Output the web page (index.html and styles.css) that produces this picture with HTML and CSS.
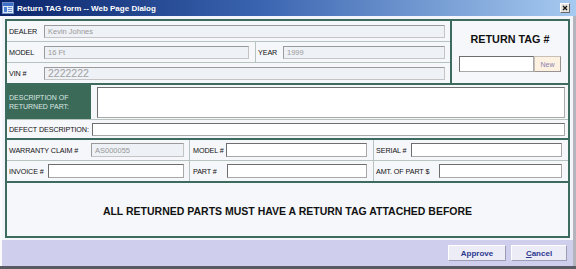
FILE: index.html
```html
<!DOCTYPE html>
<html>
<head>
<meta charset="utf-8">
<title>Return TAG form</title>
<link rel="stylesheet" href="styles.css">
</head>
<body>
<div class="window">
  <div class="titlebar">
    <svg class="appicon" width="12" height="12" viewBox="0 0 12 12">
      <rect x="0.5" y="0.5" width="11" height="11" fill="#dfe9f7" stroke="#6f8fc4"/>
      <rect x="1" y="1" width="10" height="3" fill="#3d6fc8"/>
      <rect x="2" y="5" width="3" height="5" fill="#4a7fd6"/>
      <rect x="6" y="5" width="4" height="1" fill="#6a8fd0"/>
      <rect x="6" y="7" width="4" height="1" fill="#6a8fd0"/>
      <rect x="6" y="9" width="4" height="1" fill="#6a8fd0"/>
    </svg>
    <span class="title">Return TAG form -- Web Page Dialog</span>
    <span class="close">
      <svg width="10" height="10" viewBox="0 0 10 10">
        <path d="M2.5 2.5 L7.5 7.5 M7.5 2.5 L2.5 7.5" stroke="#111" stroke-width="1.6"/>
      </svg>
    </span>
  </div>
  <div class="client">
    <div class="form">
      <div class="top">
        <div class="fields">
          <div class="row">
            <span class="lbl w37">DEALER</span>
            <span class="inp dis">Kevin Johnes</span>
          </div>
          <div class="row split">
            <div class="cell c-model">
              <span class="lbl w37">MODEL</span>
              <span class="inp dis sm">16 Ft</span>
            </div>
            <div class="cell c-year">
              <span class="lbl w27">YEAR</span>
              <span class="inp dis sm">1999</span>
            </div>
          </div>
          <div class="row">
            <span class="lbl w37">VIN #</span>
            <span class="inp dis big">2222222</span>
          </div>
        </div>
        <div class="tagpanel">
          <div class="tagtitle">RETURN TAG #</div>
          <div class="tagctl">
            <span class="inp tagin"></span>
            <span class="newbtn">New</span>
          </div>
        </div>
      </div>
      <div class="desc">
        <div class="desclbl">DESCRIPTION OF<br>RETURNED PART:</div>
        <span class="inp area"></span>
      </div>
      <div class="defect">
        <span class="lbl w85">DEFECT DESCRIPTION:</span>
        <span class="inp"></span>
      </div>
      <div class="grid">
        <div class="gcell g1">
          <span class="lbl w84">WARRANTY CLAIM #</span>
          <span class="inp dis sm">AS000055</span>
        </div>
        <div class="gcell g2">
          <span class="lbl w35">MODEL #</span>
          <span class="inp"></span>
        </div>
        <div class="gcell g3">
          <span class="lbl w37">SERIAL #</span>
          <span class="inp"></span>
        </div>
        <div class="gcell g1 last">
          <span class="lbl w41">INVOICE #</span>
          <span class="inp"></span>
        </div>
        <div class="gcell g2 last">
          <span class="lbl w36">PART #</span>
          <span class="inp"></span>
        </div>
        <div class="gcell g3 last">
          <span class="lbl w65">AMT. OF PART $</span>
          <span class="inp"></span>
        </div>
      </div>
      <div class="notice">ALL RETURNED PARTS MUST HAVE A RETURN TAG ATTACHED BEFORE</div>
    </div>
    <div class="footer">
      <span class="btn approve">Approve</span>
      <span class="btn cancel"><u>C</u>ancel</span>
    </div>
  </div>
</div>
</body>
</html>
```
FILE: styles.css
```css
* { box-sizing: border-box; margin: 0; padding: 0; }
html, body { width: 576px; height: 269px; overflow: hidden; }
body { font-family: "Liberation Sans", Arial, sans-serif; background: #f4f5fa; color: #111; }

.window {
  width: 576px; height: 269px;
  display: flex; flex-direction: column;
  border-bottom: 3px solid #5a5a62;
}

.titlebar {
  height: 16px; flex: none;
  display: flex; align-items: center;
  background: linear-gradient(to right, #0a246a 0%, #3a64b0 45%, #a6caf0 100%);
  padding-left: 2px; padding-right: 6px;
}
.appicon { flex: none; display: block; }
.title {
  margin-left: 3px;
  color: #fff; font-weight: bold; font-size: 8px;
  flex: 1; white-space: nowrap;
}
.close {
  width: 10px; height: 10px; flex: none;
  background: #e4e2dc;
  border: 1px solid; border-color: #fff #6a6a6a #6a6a6a #fff;
  display: flex; align-items: center; justify-content: center;
}
.close svg { display: block; width: 8px; height: 8px; }

.client {
  flex: 1;
  display: flex; flex-direction: column;
  border-left: 2px solid #fbfbfd;
  border-right: 3px solid #b4b4bc;
  background: #f4f5fa;
}

.form {
  margin: 3px 3px 0 3px;
  height: 219px;
  border: 2px solid #3d6b5e;
  background: #f6f7fb;
  display: flex; flex-direction: column;
}

.lbl { font-size: 7.2px; padding-left: 2px; white-space: nowrap; flex: none; color: #111; letter-spacing: -0.1px; }
.w27 { width: 27px; } .w35 { width: 35px; } .w36 { width: 36px; } .w37 { width: 37px; }
.w41 { width: 41px; } .w65 { width: 65px; } .w84 { width: 84px; } .w85 { width: 85px; }

.inp {
  flex: 1; min-width: 0;
  height: 14px;
  background: #fff;
  border: 1px solid; border-color: #6e6e6e #a8a8a8 #a8a8a8 #6e6e6e;
  font-size: 7.5px; color: #999;
  padding-left: 3px;
  display: flex; align-items: center;
  white-space: nowrap; overflow: hidden;
}
.inp.dis { background: #eef1f6; border-color: #9a9a9a #c4c4c4 #c4c4c4 #9a9a9a; }
.inp.big { font-size: 10.5px; padding-left: 3px; color: #a0a0a0; }

/* top section */
.top { display: flex; height: 64px; border-bottom: 2px solid #3d6b5e; }
.fields { width: 445px; border-right: 2px solid #3d6b5e; display: flex; flex-direction: column; }
.row {
  height: 21px; display: flex; align-items: center;
  padding-right: 5px;
  border-bottom: 1px solid #b7c3bf;
}
.row:last-child { border-bottom: none; height: 20px; }
.row .inp { height: 13px; }
.row.split { padding-right: 0; }
.cell { display: flex; align-items: center; height: 100%; }
.c-model { width: 249px; padding-right: 6px; border-right: 1px solid #b7c3bf; }
.c-year { flex: 1; padding-right: 5px; }

.tagpanel { flex: 1; display: flex; flex-direction: column; align-items: center; padding-top: 12px; }
.tagtitle { font-weight: bold; font-size: 10.8px; line-height: 12px; color: #111; }
.tagctl { margin-top: 11px; display: flex; width: 102px; height: 16px; }
.tagctl .inp { height: 16px; }
.newbtn {
  width: 27px; flex: none;
  background: #fdf1e2;
  border: 1px solid; border-color: #c8c0b8 #9a9290 #9a9290 #c8c0b8;
  font-size: 7px; color: #8a82b0;
  display: flex; align-items: center; justify-content: center;
}

/* description */
.desc { height: 35px; display: flex; align-items: center; border-bottom: 1px solid #b7c3bf; padding-right: 3px; }
.desclbl {
  width: 84px; height: 100%; flex: none;
  background: #3b6a59; color: #dce8e2;
  font-size: 7px; line-height: 9px;
  padding-left: 2px;
  display: flex; align-items: center;
}
.inp.area { height: 31px; margin-left: 6px; }

/* defect */
.defect { height: 20px; display: flex; align-items: center; padding-right: 3px; border-bottom: 2px solid #3d6b5e; }
.defect .inp { height: 13px; }

/* grid */
.grid { display: grid; grid-template-columns: 183px 184px 1fr; border-bottom: 2px solid #3d6b5e; }
.gcell { height: 21px; display: flex; align-items: center; border-bottom: 1px solid #b7c3bf; }
.gcell.last { border-bottom: none; height: 20px; }
.g1 { border-right: 1px solid #b7c3bf; padding-right: 5px; }
.g2 { border-right: 1px solid #b7c3bf; padding-left: 1px; padding-right: 6px; }
.g3 { padding-right: 6px; }

.notice {
  flex: 1;
  display: flex; align-items: center; justify-content: center;
  font-weight: bold; font-size: 10.5px; color: #111;
  padding-top: 3px;
}

.footer {
  margin-top: 2px;
  flex: 1;
  background: #cfcfed;
  display: flex; align-items: center; justify-content: flex-end;
  gap: 5px;
  padding-right: 6px;
}
.btn {
  height: 16px;
  background: #ececf7;
  border: 1px solid; border-color: #ffffff #9c9cb4 #9c9cb4 #ffffff;
  font-size: 8px; font-weight: bold; color: #2e3a8e;
  display: flex; align-items: center; justify-content: center;
}
.approve { width: 58px; }
.cancel { width: 56px; }
.cancel u { text-decoration: underline; }
```
